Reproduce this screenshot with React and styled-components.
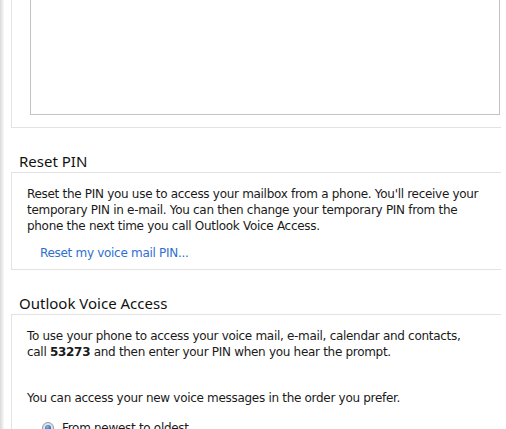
import React from 'react';
import styled, { createGlobalStyle } from 'styled-components';

const GlobalStyle = createGlobalStyle`
  html, body {
    margin: 0;
    padding: 0;
    background: #ffffff;
    overflow: hidden;
  }
  body {
    font-family: "DejaVu Sans", Verdana, sans-serif;
    font-size: 12px;
    color: #1a1a1a;
  }
`;

const Page = styled.div`
  display: flex;
  min-height: 429px;
`;

const Gutter = styled.div`
  width: 4px;
  flex: none;
  background: linear-gradient(to right, #d9d9d9, #ececec 60%, #fafafa);
`;

// scrolled view: the first panel's top lies above the window
const Content = styled.div`
  flex: 1;
  margin-top: -20px;
  padding-left: 7px;
  width: 490px;
`;

const Panel = styled.section`
  width: 490px;
  box-sizing: border-box;
  border-top: 1px solid #e3e3e3;
  border-bottom: 1px solid #e3e3e3;
  border-left: 1px solid #e3e3e3;
  padding: ${(p) => p.$pad || '13px 8px 8px 15px'};
`;

const Heading = styled.h2`
  margin: 23px 0 1px;
  padding-left: 8px;
  font-family: "Noto Sans", "Open Sans", sans-serif;
  font-weight: 400;
  font-size: 15px;
  line-height: 20px;
  color: #111111;
`;

const NoteBox = styled.textarea`
  display: block;
  box-sizing: border-box;
  width: 470px;
  height: 122px;
  margin: 0;
  border: 1px solid #c4c4c4;
  border-radius: 0;
  resize: none;
  background: #ffffff;
  outline: none;
`;

const Text = styled.p`
  margin: ${(p) => p.$mt || 0}px 0 0;
  line-height: 16px;
  letter-spacing: -0.3px;
  white-space: nowrap;

  b {
    font-weight: 700;
  }
`;

const Action = styled.a`
  display: block;
  margin: 11px 0 0 13px;
  line-height: 16px;
  letter-spacing: -0.3px;
  color: #2f6fd0;
  text-decoration: none;
  cursor: pointer;
`;

const Option = styled.label`
  display: flex;
  align-items: center;
  gap: 8px;
  margin: 14px 0 0 15px;
  line-height: 16px;
  letter-spacing: -0.3px;
`;

const Radio = styled.span`
  width: 12px;
  height: 12px;
  box-sizing: border-box;
  border-radius: 50%;
  border: 1px solid #8f9aa6;
  background: radial-gradient(circle at 50% 50%, #eef1f4, #d6dbe0);
  display: flex;
  align-items: center;
  justify-content: center;
  flex: none;

  &::after {
    content: '';
    width: 6px;
    height: 6px;
    border-radius: 50%;
    background: ${(p) => (p.$checked ? 'radial-gradient(circle at 40% 35%, #7fb6f0, #1f5fa8 75%)' : 'transparent')};
  }
`;

export default function App() {
  return (
    <>
      <GlobalStyle />
      <Page>
        <Gutter />
        <Content>
          <Panel $pad="12px 1px 12px 18px">
            <NoteBox aria-label="Notes" readOnly />
          </Panel>

          <Heading>Reset PIN</Heading>
          <Panel>
            <Text>
              Reset the PIN you use to access your mailbox from a phone. You'll receive your
              <br />
              temporary PIN in e-mail. You can then change your temporary PIN from the
              <br />
              phone the next time you call Outlook Voice Access.
            </Text>
            <Action>Reset my voice mail PIN...</Action>
          </Panel>

          <Heading>Outlook Voice Access</Heading>
          <Panel>
            <Text>
              To use your phone to access your voice mail, e-mail, calendar and contacts,
              <br />
              call <b>53273</b> and then enter your PIN when you hear the prompt.
            </Text>
            <Text $mt={30}>You can access your new voice messages in the order you prefer.</Text>
            <Option>
              <Radio $checked />
              From newest to oldest
            </Option>
          </Panel>
        </Content>
      </Page>
    </>
  );
}
